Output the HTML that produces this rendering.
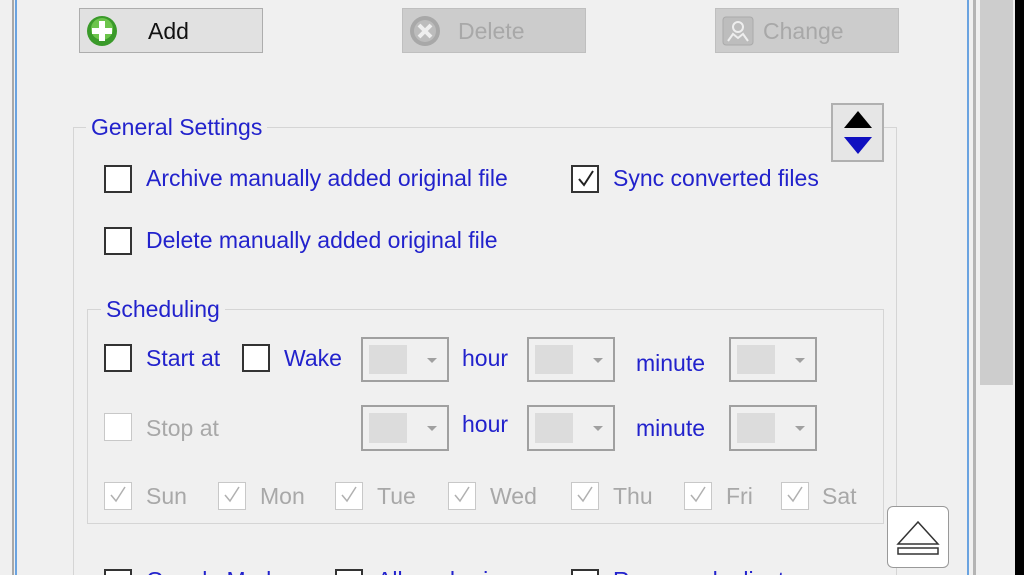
<!DOCTYPE html>
<html style="overflow:hidden;height:575px"><head><style>
*{margin:0;padding:0;box-sizing:border-box}
body{width:1024px;height:575px;overflow:hidden;background:#f0f0f0;position:relative;font-family:"Liberation Sans",sans-serif;font-size:23px;letter-spacing:0px}
.a{position:absolute}
.t{position:absolute;color:#2222cc;white-space:nowrap;line-height:24px}
.g{color:#a8a8a8}
.cb{position:absolute;width:28px;height:28px;border:2px solid #333;background:#fff}
.cbd{position:absolute;width:28px;height:28px;border:1px solid #c8c8c8;background:#fff}
.btn{position:absolute;height:45px;border:1px solid #adadad;background:#e1e1e1}
.combo{position:absolute;width:88px;border:2px solid #a0a0a0;background:#f0f0f0}
.combo i{position:absolute;left:6px;top:6px;width:38px;bottom:6px;background:#dcdcdc}
.combo b{position:absolute;right:10px;top:50%;margin-top:-2px;border-left:5px solid transparent;border-right:5px solid transparent;border-top:5px solid #a0a0a0}
.chk{position:absolute;left:4px;top:2px;width:18px;height:20px}
</style></head><body>
<div class="a" style="left:12px;top:0;width:2px;height:575px;background:#a8a8a8"></div>
<div class="a" style="left:15px;top:0;width:2px;height:575px;background:#6aa3e0"></div>
<div class="a" style="left:967px;top:0;width:2px;height:575px;background:#6aa3e0"></div>
<div class="a" style="left:973px;top:0;width:3px;height:575px;background:#b4b4b4"></div>
<div class="a" style="left:980px;top:0;width:33px;height:385px;background:#cdcdcd"></div>
<div class="a" style="left:1015px;top:0;width:9px;height:575px;background:#000"></div>

<div class="btn" style="left:79px;top:8px;width:184px"></div>
<svg class="a" style="left:85px;top:14px" width="34" height="34" viewBox="0 0 34 34"><circle cx="17" cy="17" r="15" fill="#3a9a2a"/><circle cx="17" cy="15" r="11" fill="#6cc44c"/><path d="M14 7h6v7h7v6h-7v7h-6v-7H7v-6h7z" fill="#fff"/></svg>
<div class="t" style="left:148px;top:19px;color:#111">Add</div>
<div class="btn" style="left:402px;top:8px;width:184px;background:#cccccc;border-color:#bfbfbf"></div>
<svg class="a" style="left:408px;top:14px" width="34" height="34" viewBox="0 0 34 34"><circle cx="17" cy="17" r="15" fill="#a8a8a8"/><circle cx="17" cy="17" r="11" fill="#bcbcbc"/><path d="M11 11l12 12M23 11l-12 12" stroke="#eee" stroke-width="4"/></svg>
<div class="t g" style="left:458px;top:19px">Delete</div>
<div class="btn" style="left:715px;top:8px;width:184px;background:#cccccc;border-color:#bfbfbf"></div>
<svg class="a" style="left:722px;top:16px" width="32" height="30" viewBox="0 0 32 30"><rect x="1" y="1" width="30" height="28" rx="3" fill="#bdbdbd" stroke="#aaa"/><circle cx="16" cy="11" r="5" fill="none" stroke="#eee" stroke-width="2"/><path d="M6 25l5-7 5 4 5-4 5 7" fill="none" stroke="#eee" stroke-width="2"/></svg>
<div class="t g" style="left:763px;top:19px">Change</div>

<div class="a" style="left:73px;top:127px;width:824px;height:460px;border:1px solid #d5d5d5"></div>
<div class="t" style="left:86px;top:115px;background:#f0f0f0;padding:0 5px">General Settings</div>
<div class="a" style="left:831px;top:103px;width:53px;height:59px;border:2px solid #b0b0b0;background:#e6e6e6"></div>
<div class="a" style="left:844px;top:111px;border-left:14px solid transparent;border-right:14px solid transparent;border-bottom:17px solid #000"></div>
<div class="a" style="left:844px;top:137px;border-left:14px solid transparent;border-right:14px solid transparent;border-top:17px solid #1010c0"></div>

<div class="cb" style="left:104px;top:165px"></div>
<div class="t" style="left:146px;top:166px">Archive manually added original file</div>
<div class="cb" style="left:571px;top:165px"><svg class="chk" viewBox="0 0 18 20"><path d="M2 10l5 6 9-14" fill="none" stroke="#222" stroke-width="2"/></svg></div>
<div class="t" style="left:613px;top:166px">Sync converted files</div>
<div class="cb" style="left:104px;top:227px"></div>
<div class="t" style="left:146px;top:228px">Delete manually added original file</div>

<div class="a" style="left:87px;top:309px;width:797px;height:215px;border:1px solid #d5d5d5"></div>
<div class="t" style="left:101px;top:297px;background:#f0f0f0;padding:0 5px">Scheduling</div>

<div class="cb" style="left:104px;top:344px"></div>
<div class="t" style="left:146px;top:346px">Start at</div>
<div class="cb" style="left:242px;top:344px"></div>
<div class="t" style="left:284px;top:346px">Wake</div>
<div class="combo" style="left:361px;top:337px;height:45px"><i></i><b></b></div>
<div class="t" style="left:462px;top:346px">hour</div>
<div class="combo" style="left:527px;top:337px;height:45px"><i></i><b></b></div>
<div class="t" style="left:636px;top:351px">minute</div>
<div class="combo" style="left:729px;top:337px;height:45px"><i></i><b></b></div>

<div class="cbd" style="left:104px;top:413px"></div>
<div class="t g" style="left:146px;top:416px">Stop at</div>
<div class="combo" style="left:361px;top:405px;height:46px"><i></i><b></b></div>
<div class="t" style="left:462px;top:412px">hour</div>
<div class="combo" style="left:527px;top:405px;height:46px"><i></i><b></b></div>
<div class="t" style="left:636px;top:416px">minute</div>
<div class="combo" style="left:729px;top:405px;height:46px"><i></i><b></b></div>

<div class="cbd" style="left:104px;top:482px"><svg class="chk" viewBox="0 0 18 20"><path d="M2 10l5 6 9-14" fill="none" stroke="#b0b0b0" stroke-width="1.5"/></svg></div>
<div class="t g" style="left:146px;top:484px">Sun</div>
<div class="cbd" style="left:218px;top:482px"><svg class="chk" viewBox="0 0 18 20"><path d="M2 10l5 6 9-14" fill="none" stroke="#b0b0b0" stroke-width="1.5"/></svg></div>
<div class="t g" style="left:260px;top:484px">Mon</div>
<div class="cbd" style="left:335px;top:482px"><svg class="chk" viewBox="0 0 18 20"><path d="M2 10l5 6 9-14" fill="none" stroke="#b0b0b0" stroke-width="1.5"/></svg></div>
<div class="t g" style="left:377px;top:484px">Tue</div>
<div class="cbd" style="left:448px;top:482px"><svg class="chk" viewBox="0 0 18 20"><path d="M2 10l5 6 9-14" fill="none" stroke="#b0b0b0" stroke-width="1.5"/></svg></div>
<div class="t g" style="left:490px;top:484px">Wed</div>
<div class="cbd" style="left:571px;top:482px"><svg class="chk" viewBox="0 0 18 20"><path d="M2 10l5 6 9-14" fill="none" stroke="#b0b0b0" stroke-width="1.5"/></svg></div>
<div class="t g" style="left:613px;top:484px">Thu</div>
<div class="cbd" style="left:684px;top:482px"><svg class="chk" viewBox="0 0 18 20"><path d="M2 10l5 6 9-14" fill="none" stroke="#b0b0b0" stroke-width="1.5"/></svg></div>
<div class="t g" style="left:726px;top:484px">Fri</div>
<div class="cbd" style="left:781px;top:482px"><svg class="chk" viewBox="0 0 18 20"><path d="M2 10l5 6 9-14" fill="none" stroke="#b0b0b0" stroke-width="1.5"/></svg></div>
<div class="t g" style="left:822px;top:484px">Sat</div>

<div class="a" style="left:887px;top:506px;width:62px;height:62px;border:1px solid #999;border-radius:6px;background:#fff"></div>
<svg class="a" style="left:896px;top:520px" width="46" height="36" viewBox="0 0 46 36"><path d="M22 2L2 24h40z" fill="none" stroke="#333" stroke-width="1.5"/><rect x="2" y="28" width="40" height="6" fill="none" stroke="#333" stroke-width="1.5"/></svg>

<div class="cb" style="left:104px;top:569px"></div>
<div class="t" style="left:146px;top:568px">Google Mode</div>
<div class="cb" style="left:335px;top:569px"></div>
<div class="t" style="left:377px;top:568px">Allow sharing</div>
<div class="cb" style="left:571px;top:569px"></div>
<div class="t" style="left:613px;top:568px">Remove duplicates</div>
</body></html>
